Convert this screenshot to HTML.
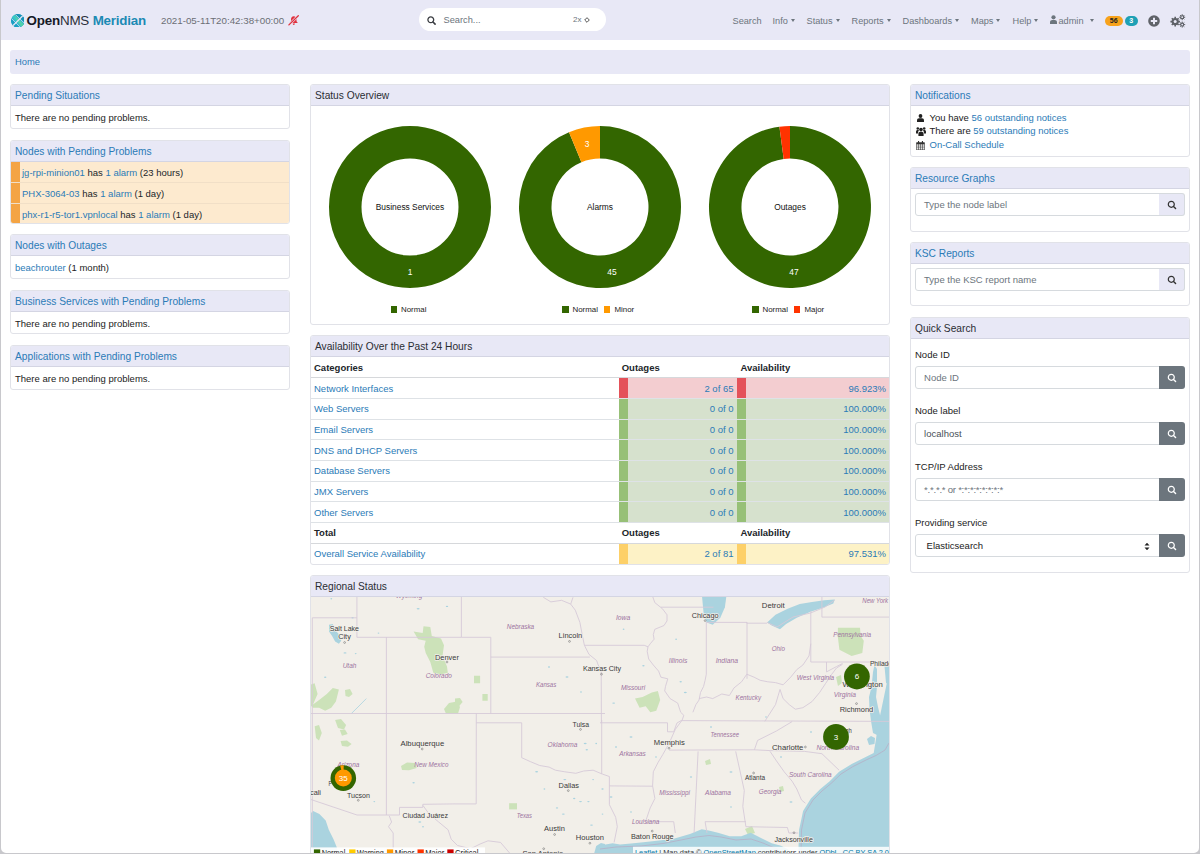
<!DOCTYPE html>
<html><head><meta charset="utf-8">
<style>
*{box-sizing:border-box;margin:0;padding:0}
html,body{width:1200px;height:854px;overflow:hidden;background:#fff;font-family:"Liberation Sans",sans-serif;color:#212529}
.abs{position:absolute}
a,.lk{color:#2b7bb7;text-decoration:none}
#nav{position:absolute;left:0;top:0;width:1200px;height:40px;background:#e8e8f6}
#frameL{position:absolute;left:0;top:0;width:1px;height:854px;background:#c8c8cc;z-index:50}
#frameR{position:absolute;right:0;top:0;width:1px;height:854px;background:#c8c8cc;z-index:50}
#frameB{position:absolute;left:0;bottom:0;width:1200px;height:1px;background:#c8c8cc;z-index:50}
.card{position:absolute;border:1px solid #e1e2e8;border-radius:3px;background:#fff;overflow:hidden}
.ch{height:21px;background:#e8e8f6;border-bottom:1px solid #d4d5e3;padding-left:4px;padding-top:1px;font-size:10.2px;line-height:20px;color:#2b7bb7;white-space:nowrap}
.ch.dk{color:#2a2d33}
.cb{font-size:9.5px;line-height:22px;padding-top:0.5px;padding-left:4px;white-space:nowrap;color:#222}
.row{position:relative;height:21px;background:#fdeacf;border-bottom:1px solid #f1dfc7;font-size:9.5px;line-height:21px;padding-left:11px;white-space:nowrap}
.row:before{content:"";position:absolute;left:0;top:0;width:9px;height:100%;background:#f4a444}
.navm{top:14px;font-size:9.2px;line-height:14px;color:#6c757d;white-space:nowrap}
.car{display:inline-block;width:0;height:0;border-left:2.6px solid transparent;border-right:2.6px solid transparent;border-top:3px solid #6c757d;margin-left:3px;vertical-align:2px}
.dl{font-size:8.4px;line-height:12px;color:#111;white-space:nowrap}
.dv{font-size:8.4px;line-height:12px;color:#fff;white-space:nowrap}
.lg{font-size:7.9px;line-height:10px;color:#222;white-space:nowrap}
.lg i{display:inline-block;width:6.5px;height:6.5px;margin-right:4px;vertical-align:-0.5px}
.av{border-collapse:collapse;width:578px;table-layout:fixed;font-size:9.5px}
.av td{height:20.7px;border-top:1px solid #dee2e6;padding:0;white-space:nowrap;line-height:19px}
.av tr.th td{font-weight:bold;color:#212529;border-top:0}
.av tr.th.t2 td{border-top:1px solid #dee2e6}
.av tr.th+tr td{border-top:1.5px solid #d6d8db}
.av .c1{width:307.7px;padding-left:3px}
.av .c2{width:118.8px;position:relative;text-align:right;padding-right:4px}
.av .c3{width:151.5px;position:relative;text-align:right;padding-right:3px}
.av tr.th .c2,.av tr.th .c3{text-align:left;padding-left:3px}
.av tr.r .c2,.av tr.r .c3{background:#f3cdd0}
.av tr.g .c2,.av tr.g .c3{background:#d6e1cd}
.av tr.y .c2,.av tr.y .c3{background:#fdf2c6}
.av tr.r td.c2:before,.av tr.r td.c3:before,.av tr.g td.c2:before,.av tr.g td.c3:before,.av tr.y td.c2:before,.av tr.y td.c3:before{content:"";position:absolute;left:0;top:0;bottom:0;width:9px}
.av tr.r td:before{background:#e4525a}
.av tr.g td:before{background:#97c077}
.av tr.y td:before{background:#fdd068}
.nt{position:absolute;left:18.5px;font-size:9.5px;line-height:14px;white-space:nowrap;color:#222}
.inp{position:absolute;left:3.6px;width:246px;height:23px;border:1px solid #d6dade;border-radius:3px 0 0 3px;font-size:9.5px;line-height:21px;padding-left:8.5px;color:#6c757d;white-space:nowrap;background:#fff}
.btn{position:absolute;left:248.3px;width:26px;height:23px;border-radius:0 3px 3px 0;display:flex;align-items:center;justify-content:center}
.btn.lt{background:#e8e8f6;border:1px solid #d6dade;border-left:0}
.btn.dkb{background:#6c757d}
.lbl{position:absolute;left:4px;font-size:9.5px;line-height:14px;color:#222;white-space:nowrap}
</style></head>
<body>
<div id="frameL"></div><div id="frameR"></div><div id="frameB"></div>
<svg style="position:absolute;left:0;top:848px;z-index:51" width="6" height="6" viewBox="0 0 6 6"><path d="M0 0 L1 0 A5 5 0 0 0 6 5 L6 6 L0 6 Z" fill="#c8c8cc"/></svg>
<svg style="position:absolute;left:1194px;top:848px;z-index:51" width="6" height="6" viewBox="0 0 6 6"><path d="M6 0 L5 0 A5 5 0 0 1 0 5 L0 6 L6 6 Z" fill="#c8c8cc"/></svg>
<div id="nav">
  <svg class="abs" style="left:10.6px;top:13.7px" width="13.6" height="13.6" viewBox="0 0 14 14">
    <defs><clipPath id="lc"><circle cx="7" cy="7" r="7"/></clipPath></defs>
    <g clip-path="url(#lc)">
      <rect width="14" height="14" fill="#20a9cb"/>
      <path d="M3 0 L14 0 L14 8 Z" fill="#1690b6"/>
      <path d="M0 3.5 L0 14 L8 14 Z" fill="#1c9fc3"/>
      <path d="M0.6 3.2 L3.2 0.6 L13.4 10.8 L10.8 13.4 Z" fill="#38c6c8"/>
      <path d="M7 7 L13.4 10.8 L10.8 13.4 Z" fill="#58d4a4"/>
      <path d="M5 5 L3.2 0.6 L13.4 10.8 L10.8 13.4 Z" fill="#50d0ac"/>
      <path d="M14.5 -0.5 L-0.5 14.5" stroke="#e8e8f6" stroke-width="1.4"/>
      <path d="M3.6 -0.4 L14.4 10.4" stroke="#e8e8f6" stroke-width="0.8"/>
      <path d="M-0.4 3.6 L10.4 14.4" stroke="#e8e8f6" stroke-width="0.8"/>
    </g>
  </svg>
  <div class="abs" style="left:26.5px;top:12px;font-size:13.4px;line-height:18px;white-space:nowrap;letter-spacing:-0.2px"><b style="color:#151a26">Open</b><span style="color:#2a2f3a">NMS</span> <b style="color:#1b8ab4">Meridian</b></div>
  <div class="abs" style="left:161px;top:13.7px;font-size:9.75px;line-height:14px;color:#6b6e75;white-space:nowrap">2021-05-11T20:42:38+00:00</div>
  <svg class="abs" style="left:287.5px;top:15px" width="11" height="10.5" viewBox="0 0 11 10.5">
    <path d="M5.8 1.3 C3.9 1.3 3 2.8 3 4.4 L3 6.3 L1.6 8 L9.8 8 L8.5 6.3 L8.5 4.4 C8.5 2.8 7.6 1.3 5.8 1.3 Z" fill="#e0303d"/>
    <path d="M4.7 8.6 L6.9 8.6 C6.9 9.5 6.4 10 5.8 10 C5.2 10 4.7 9.5 4.7 8.6Z" fill="#e0303d"/>
    <path d="M0.8 10 L10.4 0.6" stroke="#e8e8f6" stroke-width="2.4"/>
    <path d="M0.9 9.9 L10.3 0.7" stroke="#e0303d" stroke-width="1.3" stroke-linecap="round"/>
  </svg>
  <div class="abs" style="left:419px;top:8px;width:187px;height:23px;background:#fff;border-radius:12px"></div>
  <svg class="abs" style="left:427px;top:16px" width="9" height="9" viewBox="0 0 9 9"><circle cx="3.8" cy="3.8" r="2.9" fill="none" stroke="#3a3d42" stroke-width="1.3"/><path d="M6 6 L8.1 8.1" stroke="#3a3d42" stroke-width="1.6" stroke-linecap="round"/></svg>
  <div class="abs" style="left:443.5px;top:13px;font-size:9.25px;line-height:14px;color:#6c757d;white-space:nowrap">Search...</div>
  <div class="abs" style="left:573px;top:13.3px;font-size:8px;line-height:14px;color:#6c757d;white-space:nowrap">2x</div>
  <svg class="abs" style="left:584px;top:17px" width="6" height="6" viewBox="0 0 6 6"><path d="M3 0.7 L5.3 3 L3 5.3 L0.7 3 Z" fill="none" stroke="#555" stroke-width="1"/></svg>
  <div class="abs navm" style="left:732.5px">Search</div>
  <div class="abs navm" style="left:772.5px">Info<i class="car"></i></div>
  <div class="abs navm" style="left:806.5px">Status<i class="car"></i></div>
  <div class="abs navm" style="left:851.5px">Reports<i class="car"></i></div>
  <div class="abs navm" style="left:902.5px">Dashboards<i class="car"></i></div>
  <div class="abs navm" style="left:971px">Maps<i class="car"></i></div>
  <div class="abs navm" style="left:1012.5px">Help<i class="car"></i></div>
  <svg class="abs" style="left:1049.5px;top:15px" width="7" height="9" viewBox="0 0 7 9"><circle cx="3.5" cy="2.3" r="2.1" fill="#6c757d"/><path d="M0 9 L0 7.2 C0 5.6 1.2 4.9 2.2 4.9 L4.8 4.9 C5.8 4.9 7 5.6 7 7.2 L7 9 Z" fill="#6c757d"/></svg>
  <div class="abs navm" style="left:1058.5px">admin<i class="car" style="margin-left:6px"></i></div>
  <div class="abs" style="left:1105px;top:15.5px;width:17.5px;height:10px;border-radius:5px;background:#f7a21b;color:#222;font-size:7px;font-weight:bold;line-height:10px;text-align:center">56</div>
  <div class="abs" style="left:1125px;top:15.5px;width:12.5px;height:10px;border-radius:5px;background:#1ea0b5;color:#fff;font-size:7px;font-weight:bold;line-height:10px;text-align:center">3</div>
  <svg class="abs" style="left:1148px;top:14.5px" width="12" height="12" viewBox="0 0 12 12"><circle cx="6" cy="6" r="5.8" fill="#5f6268"/><path d="M6 2.8 V9.2 M2.8 6 H9.2" stroke="#e8e8f6" stroke-width="2"/></svg>
  <svg class="abs" style="left:1169.5px;top:13.5px" width="16" height="14" viewBox="0 0 16 14">
    <g fill="#5f6268">
      <circle cx="5.2" cy="7.6" r="3.6"/>
      <g stroke="#5f6268" stroke-width="1.6"><path d="M5.2 2.8 V12.4 M0.4 7.6 H10 M1.8 4.2 L8.6 11 M8.6 4.2 L1.8 11"/></g>
      <circle cx="12.2" cy="3.2" r="2"/>
      <g stroke="#5f6268" stroke-width="1"><path d="M12.2 0.2 V6.2 M9.2 3.2 H15.2 M10.1 1.1 L14.3 5.3 M14.3 1.1 L10.1 5.3"/></g>
      <circle cx="12.2" cy="10.6" r="2"/>
      <g stroke="#5f6268" stroke-width="1"><path d="M12.2 7.6 V13.6 M9.2 10.6 H15.2 M10.1 8.5 L14.3 12.7 M14.3 8.5 L10.1 12.7"/></g>
    </g>
    <circle cx="5.2" cy="7.6" r="1.5" fill="#e8e8f6"/>
    <circle cx="12.2" cy="3.2" r="0.9" fill="#e8e8f6"/>
    <circle cx="12.2" cy="10.6" r="0.9" fill="#e8e8f6"/>
  </svg>
</div>

<!-- breadcrumb -->
<div class="abs" style="left:10px;top:50px;width:1180px;height:24px;background:#e8e8f6;border-radius:3px;font-size:9.4px;line-height:24px;padding-left:5px"><a>Home</a></div>

<!-- LEFT COLUMN -->
<div class="card" style="left:10px;top:84px;width:280px;height:45px">
  <div class="ch">Pending Situations</div>
  <div class="cb">There are no pending problems.</div>
</div>
<div class="card" style="left:10px;top:140px;width:280px;height:84px">
  <div class="ch">Nodes with Pending Problems</div>
  <div class="row"><a>jg-rpi-minion01</a> has <a>1 alarm</a> (23 hours)</div>
  <div class="row"><a>PHX-3064-03</a> has <a>1 alarm</a> (1 day)</div>
  <div class="row" style="border-bottom:0"><a>phx-r1-r5-tor1.vpnlocal</a> has <a>1 alarm</a> (1 day)</div>
</div>
<div class="card" style="left:10px;top:234px;width:280px;height:45px">
  <div class="ch">Nodes with Outages</div>
  <div class="cb"><a>beachrouter</a> (1 month)</div>
</div>
<div class="card" style="left:10px;top:290px;width:280px;height:44px">
  <div class="ch">Business Services with Pending Problems</div>
  <div class="cb">There are no pending problems.</div>
</div>
<div class="card" style="left:10px;top:345px;width:280px;height:45px">
  <div class="ch">Applications with Pending Problems</div>
  <div class="cb">There are no pending problems.</div>
</div>

<!-- MIDDLE COLUMN -->
<div class="card" style="left:310px;top:84px;width:580px;height:241px">
  <div class="ch dk">Status Overview</div>
</div>
<div class="abs" style="left:0;top:0;width:1200px;height:330px;pointer-events:none">
<svg class="abs" style="left:0;top:0" width="1200" height="330" viewBox="0 0 1200 330">
<circle cx="410" cy="207" r="64.75" fill="none" stroke="#336600" stroke-width="32.5"/>
<path d="M600.00 126.00 A81 81 0 1 1 569.00 132.17 L581.44 162.19 A48.5 48.5 0 1 0 600.00 158.50 Z" fill="#336600"/>
<path d="M569.00 132.17 A81 81 0 0 1 600.00 126.00 L600.00 158.50 A48.5 48.5 0 0 0 581.44 162.19 Z" fill="#ff9900"/>
<path d="M790.00 126.00 A81 81 0 1 1 779.43 126.69 L783.67 158.91 A48.5 48.5 0 1 0 790.00 158.50 Z" fill="#336600"/>
<path d="M779.43 126.69 A81 81 0 0 1 790.00 126.00 L790.00 158.50 A48.5 48.5 0 0 0 783.67 158.91 Z" fill="#ff3300"/>
</svg>
<div class="abs dl" style="left:360px;top:201px;width:100px;text-align:center">Business Services</div>
<div class="abs dl" style="left:550px;top:201px;width:100px;text-align:center">Alarms</div>
<div class="abs dl" style="left:740px;top:201px;width:100px;text-align:center">Outages</div>
<div class="abs dv" style="left:400px;top:266px;width:20px;text-align:center">1</div>
<div class="abs dv" style="left:602px;top:266px;width:20px;text-align:center">45</div>
<div class="abs dv" style="left:784px;top:266px;width:20px;text-align:center">47</div>
<div class="abs dv" style="left:577px;top:138px;width:20px;text-align:center">3</div>
<div class="abs lg" style="left:390.5px;top:305px"><i style="background:#336600"></i>Normal</div>
<div class="abs lg" style="left:562px;top:305px"><i style="background:#336600"></i>Normal<i style="background:#ff9900;margin-left:6px"></i>Minor</div>
<div class="abs lg" style="left:752px;top:305px"><i style="background:#336600"></i>Normal<i style="background:#ff3300;margin-left:6px"></i>Major</div>
</div>
<div class="card" style="left:310px;top:335px;width:580px;height:230px">
  <div class="ch dk">Availability Over the Past 24 Hours</div>
  <table class="av">
  <tr class="th"><td class="c1">Categories</td><td class="c2">Outages</td><td class="c3">Availability</td></tr>
  <tr class="r"><td class="c1"><a>Network Interfaces</a></td><td class="c2"><a>2 of 65</a></td><td class="c3"><a>96.923%</a></td></tr>
  <tr class="g"><td class="c1"><a>Web Servers</a></td><td class="c2"><a>0 of 0</a></td><td class="c3"><a>100.000%</a></td></tr>
  <tr class="g"><td class="c1"><a>Email Servers</a></td><td class="c2"><a>0 of 0</a></td><td class="c3"><a>100.000%</a></td></tr>
  <tr class="g"><td class="c1"><a>DNS and DHCP Servers</a></td><td class="c2"><a>0 of 0</a></td><td class="c3"><a>100.000%</a></td></tr>
  <tr class="g"><td class="c1"><a>Database Servers</a></td><td class="c2"><a>0 of 0</a></td><td class="c3"><a>100.000%</a></td></tr>
  <tr class="g"><td class="c1"><a>JMX Servers</a></td><td class="c2"><a>0 of 0</a></td><td class="c3"><a>100.000%</a></td></tr>
  <tr class="g"><td class="c1"><a>Other Servers</a></td><td class="c2"><a>0 of 0</a></td><td class="c3"><a>100.000%</a></td></tr>
  <tr class="th t2"><td class="c1">Total</td><td class="c2">Outages</td><td class="c3">Availability</td></tr>
  <tr class="y last"><td class="c1"><a>Overall Service Availability</a></td><td class="c2"><a>2 of 81</a></td><td class="c3"><a>97.531%</a></td></tr>
  </table>
</div>
<div class="card" style="left:310px;top:575px;width:580px;height:300px">
  <div class="ch dk">Regional Status</div>
  <div id="map" style="position:absolute;left:0;top:21px;width:578px;height:257px;overflow:hidden"><svg width="578" height="257" viewBox="0 0 578 257" style="position:absolute;left:0;top:0">
<rect width="578" height="257" fill="#f2efe9"/>
<polygon points="102.6,34.5 111.7,36.1 112.5,29.2 119.3,30.0 120.8,39.1 130.0,41.4 133.0,48.3 131.5,58.9 136.0,69.6 136.8,75.7 130.0,77.2 122.3,75.7 119.3,65.0 114.7,55.9 113.2,49.8 114.7,43.7 107.1,42.2" fill="#cce2b9"/>
<polygon points="-1.0,87.8 3.6,86.3 6.6,97.0 2.0,107.6 8.1,103.1 15.8,97.0 21.8,90.9 27.9,92.4 24.9,104.6 20.3,110.7 14.2,113.7 8.1,110.7 2.0,110.7 -1.0,107.6" fill="#cce2b9"/>
<polygon points="34.0,93.0 39.0,92.0 41.6,97.0 38.0,100.0 34.5,99.0" fill="#cce2b9"/>
<polygon points="133.0,112.0 138.0,106.0 146.0,104.6 149.0,110.0 147.0,116.8 135.0,116.8" fill="#cce2b9"/>
<polygon points="24.1,123.0 30.0,122.0 35.1,128.0 33.0,132.4 27.0,131.0" fill="#cce2b9"/>
<polygon points="28.8,133.0 34.0,132.4 36.7,137.0 31.0,138.7" fill="#cce2b9"/>
<polygon points="29.6,144.0 36.0,143.4 40.6,147.0 37.0,149.7 31.0,149.0" fill="#cce2b9"/>
<polygon points="3.7,129.3 8.0,128.0 10.8,136.0 8.0,143.4 5.0,141.0" fill="#cce2b9"/>
<polygon points="90.0,169.0 96.0,165.4 104.0,166.0 105.7,171.0 98.0,173.2 91.0,173.0" fill="#cce2b9"/>
<polygon points="163.0,78.7 169.1,78.7 169.1,86.3 163.0,86.3" fill="#cce2b9"/>
<polygon points="171.4,97.0 176.7,97.0 176.7,103.8 171.4,103.8" fill="#cce2b9"/>
<polygon points="144.0,101.6 149.0,101.0 151.6,105.0 148.0,109.2 144.0,108.0" fill="#cce2b9"/>
<polygon points="198.1,206.2 206.0,206.2 206.0,212.4 198.1,212.4" fill="#cce2b9"/>
<polygon points="324.0,101.6 331.6,100.0 340.8,95.5 346.9,93.9 349.2,103.1 345.3,113.7 339.3,115.3 334.7,109.2 328.6,110.7" fill="#cce2b9"/>
<polygon points="526.9,30.7 549.0,30.7 549.7,39.1 552.8,43.7 551.3,55.9 540.6,58.9 528.4,52.8 526.9,40.6" fill="#cce2b9"/>
<polygon points="525.0,80.0 530.0,78.0 531.0,86.0 527.0,89.0" fill="#cce2b9"/>
<polygon points="434.0,232.0 441.0,229.0 444.0,236.0 437.0,238.0" fill="#cce2b9"/>
<polygon points="394.0,164.0 399.0,162.0 400.0,167.0 395.0,168.0" fill="#cce2b9"/>
<polygon points="468.0,190.0 472.0,189.0 473.0,194.0 469.0,195.0" fill="#cce2b9"/>
<polygon points="18.0,27.7 21.8,26.9 24.1,33.0 29.5,39.1 30.2,43.7 27.9,46.7 24.1,44.4 21.1,39.1 18.0,34.5" fill="#aad3df"/>
<polygon points="-1.0,217.1 2.1,214.0 8.4,217.1 14.7,223.4 17.8,232.8 22.5,242.2 25.7,250.1 27.0,257.0 -1.0,257.0" fill="#aad3df"/>
<polygon points="391.0,-1.0 415.4,-1.0 413.9,10.2 409.3,20.8 401.7,27.7 395.6,25.4 392.6,16.3" fill="#aad3df"/>
<polygon points="456.1,25.4 464.5,17.8 476.6,11.7 488.8,7.1 501.0,4.9 513.2,3.3 523.8,2.6 522.3,6.4 513.2,10.2 499.5,14.8 485.8,20.8 475.1,26.9 469.0,32.3 460.7,28.5" fill="#aad3df"/>
<polygon points="578.7,70.0 578.7,257.0 487.3,257.0 488.1,232.8 492.1,214.0 499.9,201.5 509.3,192.0 518.7,184.2 528.1,174.8 540.7,166.9 553.2,160.7 562.7,156.0 565.0,142.0 567.0,128.0 570.0,114.0 572.5,102.0 575.0,90.0 577.0,80.0 578.7,70.0" fill="#aad3df"/>
<polygon points="289.0,257.0 289.0,248.5 301.6,246.2 309.0,247.5 320.0,246.5 332.3,245.2 348.0,243.5 362.7,241.7 379.0,237.0 390.7,232.3 397.7,233.5 407.0,235.8 418.7,239.3 430.3,239.3 439.7,235.8 449.0,240.5 460.7,246.3 470.0,248.7 477.0,252.2 479.3,257.0" fill="#aad3df"/>
<polygon points="285.2,249.0 290.0,246.0 294.0,247.0 294.0,257.0 283.0,257.0" fill="#aad3df"/>
<polygon points="563.5,68.0 566.0,72.0 566.0,90.0 565.0,100.0 567.0,110.0 569.5,120.0 569.0,132.0 566.0,138.0 562.0,136.0 560.0,124.0 558.5,112.0 558.0,100.0 560.5,90.0 562.0,75.0" fill="#aad3df"/>
<polygon points="556.0,142.0 560.0,139.0 564.0,141.0 563.5,147.0 558.0,148.0" fill="#aad3df"/>
<polygon points="573.5,69.0 578.7,66.0 578.7,88.0 575.0,86.0" fill="#aad3df"/>
<ellipse cx="20.3" cy="1.8" rx="0.9" ry="0.7" fill="#aad3df"/>
<ellipse cx="41.6" cy="20.8" rx="1.2" ry="0.7" fill="#aad3df"/>
<ellipse cx="34" cy="55.9" rx="1.5" ry="0.7" fill="#aad3df"/>
<ellipse cx="44.7" cy="56.6" rx="0.9" ry="0.7" fill="#aad3df"/>
<ellipse cx="14.2" cy="80.2" rx="1.2" ry="0.7" fill="#aad3df"/>
<ellipse cx="107.1" cy="11.7" rx="1.5" ry="0.7" fill="#aad3df"/>
<ellipse cx="67.5" cy="36.1" rx="0.9" ry="0.7" fill="#aad3df"/>
<ellipse cx="136" cy="9.4" rx="1.2" ry="0.7" fill="#aad3df"/>
<ellipse cx="274.2" cy="146.5" rx="1.5" ry="0.7" fill="#aad3df"/>
<ellipse cx="285.2" cy="146.5" rx="0.9" ry="0.7" fill="#aad3df"/>
<ellipse cx="275.8" cy="152.8" rx="1.2" ry="0.7" fill="#aad3df"/>
<ellipse cx="253.8" cy="182.6" rx="1.5" ry="0.7" fill="#aad3df"/>
<ellipse cx="266.4" cy="190.5" rx="0.9" ry="0.7" fill="#aad3df"/>
<ellipse cx="277.4" cy="204.6" rx="1.2" ry="0.7" fill="#aad3df"/>
<ellipse cx="280.5" cy="228.1" rx="1.5" ry="0.7" fill="#aad3df"/>
<ellipse cx="291.5" cy="217.1" rx="0.9" ry="0.7" fill="#aad3df"/>
<ellipse cx="263.2" cy="201.5" rx="1.2" ry="0.7" fill="#aad3df"/>
<ellipse cx="225.6" cy="174.8" rx="1.5" ry="0.7" fill="#aad3df"/>
<ellipse cx="233.4" cy="192" rx="0.9" ry="0.7" fill="#aad3df"/>
<ellipse cx="246" cy="210.9" rx="1.2" ry="0.7" fill="#aad3df"/>
<ellipse cx="269.5" cy="204.6" rx="1.5" ry="0.7" fill="#aad3df"/>
<ellipse cx="282.1" cy="182.6" rx="0.9" ry="0.7" fill="#aad3df"/>
<ellipse cx="291.5" cy="192" rx="1.2" ry="0.7" fill="#aad3df"/>
<ellipse cx="252.3" cy="217.1" rx="1.5" ry="0.7" fill="#aad3df"/>
<ellipse cx="312.6" cy="32.3" rx="0.9" ry="0.7" fill="#aad3df"/>
<ellipse cx="332.4" cy="68.8" rx="1.2" ry="0.7" fill="#aad3df"/>
<ellipse cx="302.7" cy="106.1" rx="1.5" ry="0.7" fill="#aad3df"/>
<ellipse cx="365.1" cy="42.2" rx="0.9" ry="0.7" fill="#aad3df"/>
<ellipse cx="369.7" cy="84.8" rx="1.2" ry="0.7" fill="#aad3df"/>
<ellipse cx="374.3" cy="95.5" rx="1.5" ry="0.7" fill="#aad3df"/>
<ellipse cx="63.3" cy="204.6" rx="0.9" ry="0.7" fill="#aad3df"/>
<ellipse cx="102.6" cy="185.8" rx="1.2" ry="0.7" fill="#aad3df"/>
<ellipse cx="108.8" cy="225" rx="1.5" ry="0.7" fill="#aad3df"/>
<ellipse cx="112" cy="229.7" rx="0.9" ry="0.7" fill="#aad3df"/>
<ellipse cx="238" cy="70" rx="1.2" ry="0.7" fill="#aad3df"/>
<ellipse cx="256" cy="80" rx="1.5" ry="0.7" fill="#aad3df"/>
<ellipse cx="270" cy="95" rx="0.9" ry="0.7" fill="#aad3df"/>
<ellipse cx="305" cy="150" rx="1.2" ry="0.7" fill="#aad3df"/>
<ellipse cx="320" cy="140" rx="1.5" ry="0.7" fill="#aad3df"/>
<ellipse cx="345" cy="160" rx="0.9" ry="0.7" fill="#aad3df"/>
<ellipse cx="400" cy="130" rx="1.2" ry="0.7" fill="#aad3df"/>
<ellipse cx="420" cy="175" rx="1.5" ry="0.7" fill="#aad3df"/>
<ellipse cx="455" cy="120" rx="0.9" ry="0.7" fill="#aad3df"/>
<ellipse cx="470" cy="160" rx="1.2" ry="0.7" fill="#aad3df"/>
<ellipse cx="480" cy="205" rx="1.5" ry="0.7" fill="#aad3df"/>
<ellipse cx="420" cy="210" rx="0.9" ry="0.7" fill="#aad3df"/>
<ellipse cx="380" cy="180" rx="1.2" ry="0.7" fill="#aad3df"/>
<ellipse cx="300" cy="200" rx="1.5" ry="0.7" fill="#aad3df"/>
<ellipse cx="320" cy="215" rx="0.9" ry="0.7" fill="#aad3df"/>
<ellipse cx="500" cy="135" rx="1.2" ry="0.7" fill="#aad3df"/>
<ellipse cx="515" cy="190" rx="1.5" ry="0.7" fill="#aad3df"/>
<path d="M40.1 116.8 L47 110 L55.3 101.6" stroke="#aad3df" stroke-width="0.8" fill="none"/>
<path d="M490.0 257.0 L490.5 233.0 L494.0 216.0 L502.0 203.0 L511.0 194.0 L520.0 186.5 L530.0 177.0 L542.0 169.5 L555.0 163.0 L565.0 158.5 L574.0 153.0 L578.0 146.0" fill="none" stroke="#b9a5c0" stroke-width="0.8" opacity=".8"/>
<path d="M289.0 252.0 L305.0 250.0 L330.0 249.0 L352.0 246.5 L370.0 243.0 L385.0 240.0 L398.0 238.5 L410.0 240.0 L425.0 243.0 L440.0 242.0 L452.0 246.0 L466.0 252.0 L472.0 257.0" fill="none" stroke="#b9a5c0" stroke-width="0.8" opacity=".8"/>
<path d="M1.3 257.0 L1.3 20.8 L45.9 20.8" fill="none" stroke="#d6c9d8" stroke-width="0.9"/>
<path d="M45.9 -2.0 L45.9 40.3 L150.4 40.3 L179.8 40.3" fill="none" stroke="#d6c9d8" stroke-width="0.9"/>
<path d="M75.4 40.3 L75.4 218.0" fill="none" stroke="#d6c9d8" stroke-width="0.9"/>
<path d="M150.4 -2.0 L150.4 40.3" fill="none" stroke="#d6c9d8" stroke-width="0.9"/>
<path d="M179.8 40.3 L179.8 116.5" fill="none" stroke="#d6c9d8" stroke-width="0.9"/>
<path d="M-1.0 116.5 L294.0 116.5" fill="none" stroke="#d6c9d8" stroke-width="0.9"/>
<path d="M179.8 60.1 L278.8 60.1" fill="none" stroke="#d6c9d8" stroke-width="0.9"/>
<path d="M232.3 0.3 L239.9 4.9 L250.6 3.3 L259.7 7.1 L262.0 0.3" fill="none" stroke="#d6c9d8" stroke-width="0.9"/>
<path d="M259.7 7.1 L264.3 13.2 L268.9 25.4 L271.2 37.6 L273.4 48.3 L278.0 57.4 L285.6 63.5 L287.2 68.0 L290.2 72.6 L290.4 126.0" fill="none" stroke="#d6c9d8" stroke-width="0.9"/>
<path d="M273.4 48.3 L289.0 48.3 L333.2 48.3 L337.0 49.8" fill="none" stroke="#d6c9d8" stroke-width="0.9"/>
<path d="M165.3 116.5 L165.2 206.9 L144.0 206.9 L111.8 207.3 L111.8 210.4 L88.5 210.4 L88.5 218.0 L46.0 218.0 L-1.0 202.2" fill="none" stroke="#d6c9d8" stroke-width="0.9"/>
<path d="M165.3 125.8 L210.7 125.8 L210.7 160.7 L219.3 164.6 L228.7 168.5 L238.1 170.1 L244.4 173.2 L253.8 174.8 L264.8 176.3 L272.7 174.0 L282.1 173.2 L291.4 177.1 L298.4 179.5 L298.4 207.7 L304.7 220.3 L306.3 229.7 L303.1 245.4" fill="none" stroke="#d6c9d8" stroke-width="0.9"/>
<path d="M290.7 123.0 L290.7 177.0" fill="none" stroke="#d6c9d8" stroke-width="0.9"/>
<path d="M112.0 208.5 L118.2 217.1 L127.7 225.0 L137.1 232.8 L140.2 242.2 L146.5 248.5 L159.7 251.7 L169.1 247.0 L177.0 243.8 L189.5 245.4 L198.9 256.4" fill="none" stroke="#d6c9d8" stroke-width="0.9"/>
<path d="M78.2 218.7 L80.6 225.0 L77.5 229.7 L82.2 236.0 L82.2 257.0" fill="none" stroke="#d6c9d8" stroke-width="0.9"/>
<path d="M341.5 -1.0 L343.8 5.6 L351.4 11.7 L356.0 17.8 L356.0 23.9 L353.0 28.5 L343.8 32.3 L342.3 37.6 L343.1 42.2 L339.3 46.7 L337.0 49.8 L336.2 54.3 L337.7 62.0 L342.3 68.0 L347.6 74.1 L349.9 80.2 L356.8 81.8 L354.5 89.4 L353.7 93.9 L359.1 101.6 L366.7 106.1 L369.7 115.3 L372.8 118.3 L371.2 123.0 L364.3 132.4 L358.0 146.5 L351.8 157.5 L347.1 165.4 L342.3 174.8 L341.6 188.9 L343.9 201.5 L339.2 210.9 L334.5 224.7 L362.7 224.7 L364.3 236.0" fill="none" stroke="#d6c9d8" stroke-width="0.9"/>
<path d="M349.9 10.2 L402.5 10.2" fill="none" stroke="#d6c9d8" stroke-width="0.9"/>
<path d="M395.3 25.4 L395.3 77.2 L394.1 83.3 L392.6 89.4 L389.5 95.5 L388.0 103.1 L384.9 107.6 L381.9 115.3" fill="none" stroke="#d6c9d8" stroke-width="0.9"/>
<path d="M395.3 25.4 L436.0 25.4 L436.0 81.8" fill="none" stroke="#d6c9d8" stroke-width="0.9"/>
<path d="M388.0 101.6 L395.6 100.0 L401.7 101.6 L410.8 97.0 L418.4 98.5 L423.0 90.9 L430.6 84.8 L435.8 77.2 L443.1 80.2 L449.2 83.3 L456.8 84.8 L464.5 85.6 L472.1 87.8 L479.7 80.2 L485.8 72.6 L491.9 68.0 L498.0 58.9 L499.8 46.7" fill="none" stroke="#d6c9d8" stroke-width="0.9"/>
<path d="M435.8 25.4 L435.8 26.2 L456.0 26.2" fill="none" stroke="#d6c9d8" stroke-width="0.9"/>
<path d="M499.8 14.0 L499.8 65.0 L578.0 65.0" fill="none" stroke="#d6c9d8" stroke-width="0.9"/>
<path d="M510.9 -1.0 L510.9 20.1 L578.0 20.1" fill="none" stroke="#d6c9d8" stroke-width="0.9"/>
<path d="M469.0 92.4 L472.1 101.6 L478.2 107.6 L484.3 112.2 L491.9 110.7 L501.0 104.6 L508.6 95.5 L514.7 86.3 L520.8 77.2 L525.4 71.1 L531.5 67.3" fill="none" stroke="#d6c9d8" stroke-width="0.9"/>
<path d="M515.5 65.0 L515.5 74.9 L525.4 69.6 L531.5 66.5" fill="none" stroke="#d6c9d8" stroke-width="0.9"/>
<path d="M469.0 92.4 L464.5 107.6 L453.8 124.4" fill="none" stroke="#d6c9d8" stroke-width="0.9"/>
<path d="M289.0 125.8 L356.5 125.8 L356.5 134.8 L362.7 134.8 L365.9 126.1 L370.0 123.6 L578.0 124.4" fill="none" stroke="#d6c9d8" stroke-width="0.9"/>
<path d="M298.4 188.9 L341.6 189.2" fill="none" stroke="#d6c9d8" stroke-width="0.9"/>
<path d="M358.0 153.1 L443.4 152.8 L459.1 153.6 L493.6 154.4 L510.9 156.7 L528.1 173.2" fill="none" stroke="#d6c9d8" stroke-width="0.9"/>
<path d="M387.1 154.4 L383.1 236.0" fill="none" stroke="#d6c9d8" stroke-width="0.9"/>
<path d="M424.7 154.4 L433.3 193.6 L431.8 209.3 L434.9 229.7 L476.4 230.5 L477.9 236.0 L487.3 236.0" fill="none" stroke="#d6c9d8" stroke-width="0.9"/>
<path d="M394.1 224.7 L434.9 224.7" fill="none" stroke="#d6c9d8" stroke-width="0.9"/>
<path d="M394.1 224.7 L396.0 236.0" fill="none" stroke="#d6c9d8" stroke-width="0.9"/>
<path d="M459.1 154.4 L465.4 163.8 L473.2 174.8 L481.1 184.2 L485.8 192.0 L490.5 203.0 L494.4 206.2" fill="none" stroke="#d6c9d8" stroke-width="0.9"/>
<path d="M443.4 152.8 L446.6 143.4 L465.4 134.0 L481.1 124.6" fill="none" stroke="#d6c9d8" stroke-width="0.9"/>
<path d="M456.1 25.4 L466.0 30.0 L482.0 20.0 L499.5 16.0 L514.0 10.0 L523.8 3.0" fill="none" stroke="#d6c9d8" stroke-width="0.9"/>
<g font-family="Liberation Sans" font-size="7.6" fill="#3a3a3a" stroke="#f2efe9" stroke-width="1.6" paint-order="stroke" stroke-linejoin="round">
<text x="18.8" y="33.8" textLength="29.2" lengthAdjust="spacingAndGlyphs">Salt Lake</text>
<text x="27.2" y="42.2" textLength="12.6" lengthAdjust="spacingAndGlyphs">City</text>
<text x="123.9" y="62.7" textLength="24" lengthAdjust="spacingAndGlyphs">Denver</text>
<text x="247.6" y="41.4" textLength="23.6" lengthAdjust="spacingAndGlyphs">Lincoln</text>
<text x="271.9" y="74.1" textLength="38.1" lengthAdjust="spacingAndGlyphs">Kansas City</text>
<text x="261.5" y="130.1" textLength="16.5" lengthAdjust="spacingAndGlyphs">Tulsa</text>
<text x="89.5" y="149.4" textLength="43.7" lengthAdjust="spacingAndGlyphs">Albuquerque</text>
<text x="247.6" y="190.8" textLength="20.4" lengthAdjust="spacingAndGlyphs">Dallas</text>
<text x="35.9" y="200.7" textLength="23" lengthAdjust="spacingAndGlyphs">Tucson</text>
<text x="-1" y="198.3" textLength="11" lengthAdjust="spacingAndGlyphs">cali</text>
<text x="17.5" y="188.6" textLength="3.5" lengthAdjust="spacingAndGlyphs">P</text>
<text x="91.6" y="221.1" textLength="45.4" lengthAdjust="spacingAndGlyphs">Ciudad Juárez</text>
<text x="233.1" y="234.4" textLength="20.7" lengthAdjust="spacingAndGlyphs">Austin</text>
<text x="264.8" y="243" textLength="28.2" lengthAdjust="spacingAndGlyphs">Houston</text>
<text x="211.5" y="259" textLength="40.8" lengthAdjust="spacingAndGlyphs">San Antonio</text>
<text x="450.8" y="11.4" textLength="22.8" lengthAdjust="spacingAndGlyphs">Detroit</text>
<text x="380.8" y="20.5" textLength="26.7" lengthAdjust="spacingAndGlyphs">Chicago</text>
<text x="342.8" y="148.1" textLength="30.9" lengthAdjust="spacingAndGlyphs">Memphis</text>
<text x="461" y="152.5" textLength="31.4" lengthAdjust="spacingAndGlyphs">Charlotte</text>
<text x="528.7" y="114.5" textLength="33.5" lengthAdjust="spacingAndGlyphs">Richmond</text>
<text x="434" y="183.4" textLength="20.1" lengthAdjust="spacingAndGlyphs">Atlanta</text>
<text x="558.9" y="68.8" textLength="36" lengthAdjust="spacingAndGlyphs">Philadelphia</text>
<text x="531.5" y="90.4" textLength="40.3" lengthAdjust="spacingAndGlyphs">Washington</text>
<text x="319.9" y="241.9" textLength="42.8" lengthAdjust="spacingAndGlyphs">Baton Rouge</text>
<text x="463.5" y="244.9" textLength="38.4" lengthAdjust="spacingAndGlyphs">Jacksonville</text>
<text x="521" y="136.3" textLength="19.7" lengthAdjust="spacingAndGlyphs">Raleigh</text>
<text x="44" y="257.5" textLength="20" lengthAdjust="spacingAndGlyphs">Sonora</text>
</g>
<g fill="none" stroke="#777" stroke-width="0.6">
<circle cx="33.6" cy="45.5" r="0.9"/>
<circle cx="136" cy="65" r="0.9"/>
<circle cx="258.5" cy="44.4" r="0.9"/>
<circle cx="290.5" cy="77.2" r="0.9"/>
<circle cx="269.5" cy="132.4" r="0.9"/>
<circle cx="111.2" cy="152" r="0.9"/>
<circle cx="257.3" cy="193.6" r="0.9"/>
<circle cx="47.3" cy="203.3" r="0.9"/>
<circle cx="243.6" cy="237.5" r="0.9"/>
<circle cx="278.9" cy="246.2" r="0.9"/>
<circle cx="232.7" cy="251.7" r="0.9"/>
<circle cx="394.1" cy="23.6" r="0.9"/>
<circle cx="358" cy="151.2" r="0.9"/>
<circle cx="494.4" cy="150" r="0.9"/>
<circle cx="545.5" cy="106.6" r="0.9"/>
<circle cx="442.6" cy="176" r="0.9"/>
<circle cx="341.2" cy="234.1" r="0.9"/>
<circle cx="483" cy="235.7" r="0.9"/>
</g>
<g font-family="Liberation Sans" font-style="italic" font-size="6.6" fill="#9d73a0">
<text x="84.7" y="1" textLength="26.5" lengthAdjust="spacingAndGlyphs">Wyoming</text>
<text x="195.8" y="32.3" textLength="27.4" lengthAdjust="spacingAndGlyphs">Nebraska</text>
<text x="31.7" y="70.8" textLength="13.7" lengthAdjust="spacingAndGlyphs">Utah</text>
<text x="114.7" y="81" textLength="26.2" lengthAdjust="spacingAndGlyphs">Colorado</text>
<text x="225" y="90.4" textLength="20.3" lengthAdjust="spacingAndGlyphs">Kansas</text>
<text x="236.6" y="149.7" textLength="29.8" lengthAdjust="spacingAndGlyphs">Oklahoma</text>
<text x="26.5" y="169.8" textLength="21.9" lengthAdjust="spacingAndGlyphs">Arizona</text>
<text x="103.3" y="170.1" textLength="34.1" lengthAdjust="spacingAndGlyphs">New Mexico</text>
<text x="205.7" y="221.1" textLength="15.2" lengthAdjust="spacingAndGlyphs">Texas</text>
<text x="305" y="23.1" textLength="14.2" lengthAdjust="spacingAndGlyphs">Iowa</text>
<text x="357.8" y="65.8" textLength="18.5" lengthAdjust="spacingAndGlyphs">Illinois</text>
<text x="404.7" y="66.1" textLength="22.3" lengthAdjust="spacingAndGlyphs">Indiana</text>
<text x="309.9" y="93.2" textLength="24.2" lengthAdjust="spacingAndGlyphs">Missouri</text>
<text x="424.5" y="103.4" textLength="25.5" lengthAdjust="spacingAndGlyphs">Kentucky</text>
<text x="551.3" y="6.4" textLength="25.8" lengthAdjust="spacingAndGlyphs">New York</text>
<text x="522.3" y="39.9" textLength="37.8" lengthAdjust="spacingAndGlyphs">Pennsylvania</text>
<text x="460.7" y="54.3" textLength="13.2" lengthAdjust="spacingAndGlyphs">Ohio</text>
<text x="485.8" y="82.5" textLength="37.3" lengthAdjust="spacingAndGlyphs">West Virginia</text>
<text x="522.8" y="100" textLength="22.1" lengthAdjust="spacingAndGlyphs">Virginia</text>
<text x="399.6" y="140.3" textLength="28.3" lengthAdjust="spacingAndGlyphs">Tennessee</text>
<text x="308.3" y="159.4" textLength="26.5" lengthAdjust="spacingAndGlyphs">Arkansas</text>
<text x="348.2" y="198.3" textLength="30.7" lengthAdjust="spacingAndGlyphs">Mississippi</text>
<text x="394.1" y="198.3" textLength="25.9" lengthAdjust="spacingAndGlyphs">Alabama</text>
<text x="320.9" y="227.3" textLength="27.4" lengthAdjust="spacingAndGlyphs">Louisiana</text>
<text x="505.4" y="152.5" textLength="42.7" lengthAdjust="spacingAndGlyphs">North Carolina</text>
<text x="477.9" y="180.3" textLength="42.7" lengthAdjust="spacingAndGlyphs">South Carolina</text>
<text x="447.8" y="196.7" textLength="22.6" lengthAdjust="spacingAndGlyphs">Georgia</text>
</g>
<circle cx="32.3" cy="181.1" r="12.8" fill="#336600"/>
<path d="M29.18 168.58 A12.9 12.9 0 0 1 32.75 168.21 L32.58 173.10 A8 8 0 0 0 30.36 173.34 Z" fill="#ff9900"/>
<circle cx="32.3" cy="181.1" r="8.5" fill="#ff9900"/>
<text x="32.3" y="184.0" font-family="Liberation Sans" font-size="8" fill="#fff" text-anchor="middle">35</text>
<circle cx="545.9" cy="79.5" r="12.9" fill="#336600"/>
<text x="545.9" y="82.4" font-family="Liberation Sans" font-size="8" fill="#fff" text-anchor="middle">6</text>
<circle cx="525" cy="139.9" r="12.9" fill="#336600"/>
<text x="525" y="142.8" font-family="Liberation Sans" font-size="8" fill="#fff" text-anchor="middle">3</text>
<rect x="0" y="250.4" width="174" height="7" fill="#fff" opacity=".92"/>
<rect x="2.9" y="252.4" width="6.3" height="6" fill="#336600"/>
<text x="10.8" y="258.6" font-family="Liberation Sans" font-size="8.4" fill="#222" textLength="23.5" lengthAdjust="spacingAndGlyphs">Normal</text>
<rect x="38.2" y="252.4" width="6.3" height="6" fill="#ffcc00"/>
<text x="46.1" y="258.6" font-family="Liberation Sans" font-size="8.4" fill="#222" textLength="26.6" lengthAdjust="spacingAndGlyphs">Warning</text>
<rect x="75.9" y="252.4" width="6.3" height="6" fill="#ff9900"/>
<text x="83.7" y="258.6" font-family="Liberation Sans" font-size="8.4" fill="#222" textLength="19.6" lengthAdjust="spacingAndGlyphs">Minor</text>
<rect x="106.5" y="252.4" width="6.3" height="6" fill="#ff3300"/>
<text x="114.3" y="258.6" font-family="Liberation Sans" font-size="8.4" fill="#222" textLength="18.9" lengthAdjust="spacingAndGlyphs">Major</text>
<rect x="136.3" y="252.4" width="6.3" height="6" fill="#cc0000"/>
<text x="144.1" y="258.6" font-family="Liberation Sans" font-size="8.4" fill="#222" textLength="23.4" lengthAdjust="spacingAndGlyphs">Critical</text>
<rect x="322" y="249.8" width="257" height="8" fill="#fff" opacity=".85"/>
<text x="324" y="258" font-family="Liberation Sans" font-size="7.6" fill="#333" textLength="254" lengthAdjust="spacingAndGlyphs"><tspan fill="#0078a8">Leaflet</tspan> | Map data © <tspan fill="#0078a8">OpenStreetMap</tspan> contributors under <tspan fill="#0078a8">ODbL</tspan>, <tspan fill="#0078a8">CC BY-SA 2.0</tspan></text>
</svg></div>
</div>

<!-- RIGHT COLUMN -->
<div class="card" style="left:910px;top:84px;width:280px;height:73px">
  <div class="ch">Notifications</div>
  <div class="nt" style="top:25.7px;height:14px">You have <a>56 outstanding notices</a></div>
  <div class="nt" style="top:39.4px;height:14px">There are <a>59 outstanding notices</a></div>
  <div class="nt" style="top:53px;height:14px"><a>On-Call Schedule</a></div>
  <svg class="abs" style="left:6px;top:29px" width="7" height="8" viewBox="0 0 7 8"><ellipse cx="3.5" cy="2" rx="1.9" ry="2" fill="#222"/><path d="M0 8 L0 6.4 C0 5 0.9 4.3 2 4.3 L5 4.3 C6.1 4.3 7 5 7 6.4 L7 8 Z" fill="#222"/></svg>
  <svg class="abs" style="left:4.7px;top:42px" width="10" height="9" viewBox="0 0 10 9"><circle cx="5" cy="2.6" r="1.8" fill="#222"/><circle cx="1.8" cy="1.5" r="1.3" fill="#222"/><circle cx="8.2" cy="1.5" r="1.3" fill="#222"/><path d="M2.4 9 L2.4 7 C2.4 5.6 3.3 4.8 4.2 4.8 L5.8 4.8 C6.7 4.8 7.6 5.6 7.6 7 L7.6 9 Z" fill="#222"/><path d="M0 6.4 L0 4.8 C0 3.7 0.7 3.1 1.5 3.1 L3.2 3.1 C2.5 3.7 2.1 4.5 2.1 5.6 L2.1 6.4 Z M10 6.4 L10 4.8 C10 3.7 9.3 3.1 8.5 3.1 L6.8 3.1 C7.5 3.7 7.9 4.5 7.9 5.6 L7.9 6.4 Z" fill="#222"/></svg>
  <svg class="abs" style="left:5px;top:55.5px" width="9" height="9.5" viewBox="0 0 9 9.5"><rect x="0.2" y="1.2" width="8.6" height="8.1" rx="0.6" fill="#333"/><rect x="0.700" y="3.400" width="1.525" height="1.37" fill="#fff"/><rect x="0.700" y="5.270" width="1.525" height="1.37" fill="#fff"/><rect x="0.700" y="7.140" width="1.525" height="1.37" fill="#fff"/><rect x="2.725" y="3.400" width="1.525" height="1.37" fill="#fff"/><rect x="2.725" y="5.270" width="1.525" height="1.37" fill="#fff"/><rect x="2.725" y="7.140" width="1.525" height="1.37" fill="#fff"/><rect x="4.750" y="3.400" width="1.525" height="1.37" fill="#fff"/><rect x="4.750" y="5.270" width="1.525" height="1.37" fill="#fff"/><rect x="4.750" y="7.140" width="1.525" height="1.37" fill="#fff"/><rect x="6.775" y="3.400" width="1.525" height="1.37" fill="#fff"/><rect x="6.775" y="5.270" width="1.525" height="1.37" fill="#fff"/><rect x="6.775" y="7.140" width="1.525" height="1.37" fill="#fff"/><rect x="2" y="0" width="1.1" height="2.2" fill="#333"/><rect x="5.9" y="0" width="1.1" height="2.2" fill="#333"/></svg>
</div>
<div class="card" style="left:910px;top:167px;width:280px;height:65px">
  <div class="ch">Resource Graphs</div>
  <div class="inp" style="top:25.3px">Type the node label</div>
  <div class="btn lt" style="top:25.3px"><svg width="10" height="10" viewBox="0 0 10 10"><circle cx="4.3" cy="4.3" r="3" fill="none" stroke="#333" stroke-width="1.2"/><path d="M6.5 6.5 L8.6 8.6" stroke="#333" stroke-width="1.4" stroke-linecap="round"/></svg></div>
</div>
<div class="card" style="left:910px;top:242px;width:280px;height:64px">
  <div class="ch">KSC Reports</div>
  <div class="inp" style="top:25.3px">Type the KSC report name</div>
  <div class="btn lt" style="top:25.3px"><svg width="10" height="10" viewBox="0 0 10 10"><circle cx="4.3" cy="4.3" r="3" fill="none" stroke="#333" stroke-width="1.2"/><path d="M6.5 6.5 L8.6 8.6" stroke="#333" stroke-width="1.4" stroke-linecap="round"/></svg></div>
</div>
<div class="card" style="left:910px;top:317px;width:280px;height:256px">
  <div class="ch dk">Quick Search</div>
  <div class="lbl" style="top:30px">Node ID</div>
  <div class="inp" style="top:48.2px">Node ID</div>
  <div class="btn dkb" style="top:48.2px"><svg width="10" height="10" viewBox="0 0 10 10"><circle cx="4.3" cy="4.3" r="3" fill="none" stroke="#fff" stroke-width="1.2"/><path d="M6.5 6.5 L8.6 8.6" stroke="#fff" stroke-width="1.4" stroke-linecap="round"/></svg></div>
  <div class="lbl" style="top:86px">Node label</div>
  <div class="inp" style="top:104.2px;color:#495057">localhost</div>
  <div class="btn dkb" style="top:104.2px"><svg width="10" height="10" viewBox="0 0 10 10"><circle cx="4.3" cy="4.3" r="3" fill="none" stroke="#fff" stroke-width="1.2"/><path d="M6.5 6.5 L8.6 8.6" stroke="#fff" stroke-width="1.4" stroke-linecap="round"/></svg></div>
  <div class="lbl" style="top:142px">TCP/IP Address</div>
  <div class="inp" style="top:160.2px;font-size:9.6px;letter-spacing:-0.25px">*.*.*.* or *:*:*:*:*:*:*:*</div>
  <div class="btn dkb" style="top:160.2px"><svg width="10" height="10" viewBox="0 0 10 10"><circle cx="4.3" cy="4.3" r="3" fill="none" stroke="#fff" stroke-width="1.2"/><path d="M6.5 6.5 L8.6 8.6" stroke="#fff" stroke-width="1.4" stroke-linecap="round"/></svg></div>
  <div class="lbl" style="top:198px">Providing service</div>
  <div class="inp" style="top:216.2px;color:#222;padding-left:11px">Elasticsearch<svg class="abs" style="right:10px;top:7px" width="6" height="9" viewBox="0 0 6 9"><path d="M0.5 3.6 L3 0.8 L5.5 3.6 Z M0.5 5.4 L3 8.2 L5.5 5.4 Z" fill="#222"/></svg></div>
  <div class="btn dkb" style="top:216.2px"><svg width="10" height="10" viewBox="0 0 10 10"><circle cx="4.3" cy="4.3" r="3" fill="none" stroke="#fff" stroke-width="1.2"/><path d="M6.5 6.5 L8.6 8.6" stroke="#fff" stroke-width="1.4" stroke-linecap="round"/></svg></div>
</div>

</body></html>
